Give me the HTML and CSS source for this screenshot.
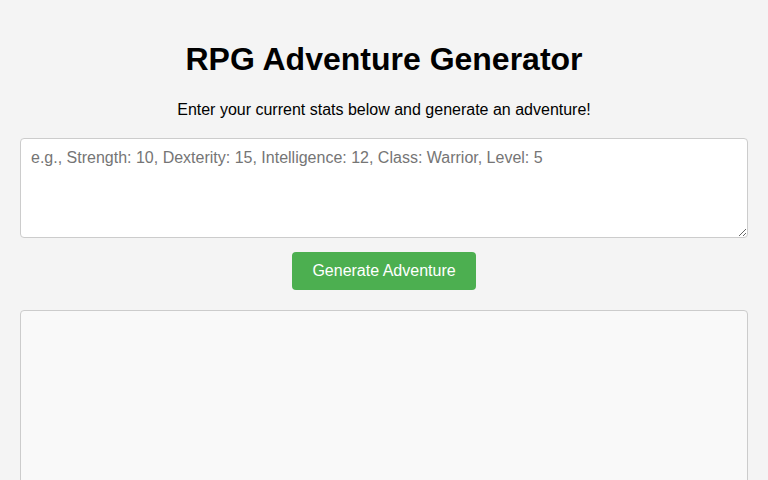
FILE: index.html
```html
<!DOCTYPE html>
<html lang="en">

<head>
    <meta charset="UTF-8" />
    <meta name="viewport" content="width=device-width, initial-scale=1" />
    <title>RPG Adventure Generator</title>
    <link rel="stylesheet" href="styles.css">
</head>

<body>
    <div class="container">
        <h1>RPG Adventure Generator</h1>
        <p class="intro">Enter your current stats below and generate an adventure!</p>
        <textarea id="stats" placeholder="e.g., Strength: 10, Dexterity: 15, Intelligence: 12, Class: Warrior, Level: 5"></textarea>
        <button id="generateBtn" type="button">Generate Adventure</button>
        <div class="output" id="output"></div>
    </div>
</body>
</html>
```

FILE: styles.css
```css
* {
    box-sizing: border-box;
}

body {
    font-family: "Liberation Sans", Arial, sans-serif;
    background-color: #f4f4f4;
    margin: 0;
    padding: 20px;
    color: #000;
}

.container {
    display: flex;
    flex-direction: column;
    align-items: center;
}

h1 {
    margin: 21px 0 0;
    font-size: 32px;
    font-weight: bold;
    text-align: center;
}

.intro {
    margin: 23px 0 0;
    font-size: 16px;
    text-align: center;
}

textarea {
    display: block;
    width: 100%;
    height: 100px;
    margin-top: 19px;
    padding: 10px;
    border: 1px solid #ccc;
    border-radius: 4px;
    background: #fff;
    font-family: "Liberation Sans", Arial, sans-serif;
    font-size: 16px;
    resize: vertical;
}

textarea::placeholder {
    color: #757575;
}

button {
    margin-top: 14px;
    padding: 10px 20px;
    background-color: #4CAF50;
    color: white;
    border: none;
    border-radius: 4px;
    font-family: "Liberation Sans", Arial, sans-serif;
    font-size: 16px;
    cursor: pointer;
}

button:hover {
    background-color: #45a049;
}

.output {
    width: 100%;
    min-height: 200px;
    margin-top: 20px;
    padding: 15px;
    background: #f9f9f9;
    border: 1px solid #ccc;
    border-radius: 4px;
}
```
